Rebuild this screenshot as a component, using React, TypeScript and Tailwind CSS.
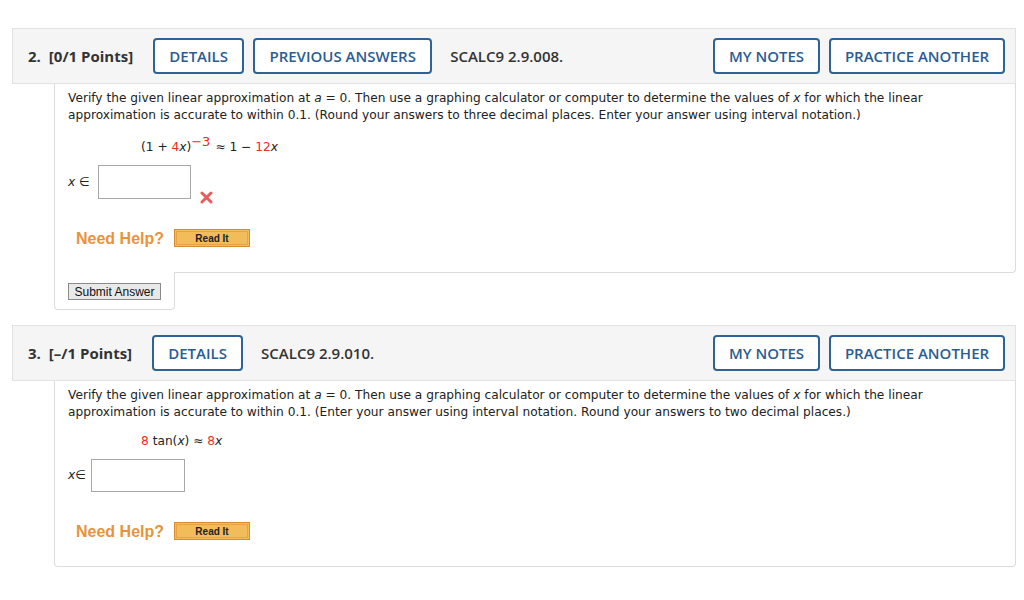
import React from "react";

const hdrFont = { fontFamily: '"Open Sans", "Liberation Sans", sans-serif' };
const bodyFont = { fontFamily: '"DejaVu Sans", Verdana, sans-serif' };
const arial = { fontFamily: '"Liberation Sans", Arial, sans-serif' };

function Btn({ children, w }: { children: React.ReactNode; w: string }) {
  return (
    <div
      className={`h-[36px] ${w} flex items-center justify-center rounded-[4px] border-2 border-[#2f6396] bg-white text-[15px] font-semibold text-[#2a5c92] shrink-0`}
      style={hdrFont}
    >
      {children}
    </div>
  );
}

function Header({ num, pts, code, prev }: { num: string; pts: string; code: string; prev?: boolean }) {
  return (
    <div className="h-[56px] flex items-center bg-[#f5f5f5] border border-[#e2e2e2] pl-[15px] pr-[10px]">
      <div className="flex items-center text-[15px] font-bold text-[#333]" style={hdrFont}>
        <span>{num}</span>
        <span className="ml-[8px]">{pts}</span>
      </div>
      <div className="ml-[20px] flex gap-[9px]">
        <Btn w="w-[91px]">DETAILS</Btn>
        {prev && <Btn w="w-[179px]">PREVIOUS ANSWERS</Btn>}
      </div>
      <div className="ml-[18px] text-[15px] font-semibold text-[#333]" style={hdrFont}>
        {code}
      </div>
      <div className="ml-auto flex gap-[9px]">
        <Btn w="w-[107px]">MY NOTES</Btn>
        <Btn w="w-[176px]">PRACTICE ANOTHER</Btn>
      </div>
    </div>
  );
}

function NeedHelp() {
  return (
    <div className="flex items-center ml-[8px]">
      <span className="text-[16px] font-bold text-[#e8933b]" style={arial}>
        Need Help?
      </span>
      <div className="ml-[10px] w-[76px] h-[18px] border border-[#d98a2e] bg-[#f3bc5b] p-[1px]">
        <div
          className="w-full h-full border border-[#e7a446] flex items-center justify-center text-[10px] font-bold text-[#222]"
          style={arial}
        >
          Read It
        </div>
      </div>
    </div>
  );
}

const R = ({ children }: { children: React.ReactNode }) => <span className="text-[#ee2a1c]">{children}</span>;

export default function App() {
  return (
    <div className="w-[1024px] h-[600px] bg-white pt-[28px] pl-[12px]">
      <div className="w-[1004px]">
        <Header num="2." pts="[0/1 Points]" code="SCALC9 2.9.008." prev />
        <div className="ml-[42px]">
          <div
            className="border-l border-r border-b border-[#dcdcdc] rounded-br-[4px] pl-[13px] pt-[6px] h-[189px] text-[12.2px] text-[#222] leading-[17px]"
            style={bodyFont}
          >
            <p>
              Verify the given linear approximation at <i>a</i> = 0. Then use a graphing calculator or computer to determine the values of <i>x</i> for which the linear
              <br />
              approximation is accurate to within 0.1. (Round your answers to three decimal places. Enter your answer using interval notation.)
            </p>
            <div className="mt-[15px] ml-[73px] flex items-start">
              <span>(1 + <R>4</R><i>x</i>)</span>
              <span className="relative -top-[6px] text-[13px] text-[#ee2a1c]">−3</span>
              <span className="ml-[5px]">≈ 1 − <R>12</R><i>x</i></span>
            </div>
            <div className="mt-[9px] flex items-start">
              <span className="mt-[9px]"><i>x</i> ∈</span>
              <div className="ml-[8px] w-[93px] h-[34px] border border-[#a8a8a8] bg-white" />
              <svg className="ml-[9px] mt-[26px]" width="13" height="13" viewBox="0 0 13 13">
                <path d="M2 2 L11 11 M11 2 L2 11" stroke="#ea5b5b" strokeWidth="3" strokeLinecap="round" />
              </svg>
            </div>
            <div className="mt-[25px]">
              <NeedHelp />
            </div>
          </div>
          <div className="-mt-px w-[121px] h-[38px] bg-white border-l border-r border-b border-[#dcdcdc] rounded-b-[4px] pl-[13px] pt-[11px]">
            <div
              className="w-[93px] h-[17px] border border-[#8a8a8a] bg-[#e9e9e9] flex items-center justify-center text-[12px] text-[#111]"
              style={arial}
            >
              Submit Answer
            </div>
          </div>
        </div>

        <div className="mt-[15px]">
          <Header num="3." pts="[–/1 Points]" code="SCALC9 2.9.010." />
        </div>
        <div className="ml-[42px]">
          <div
            className="border-l border-r border-b border-[#dcdcdc] rounded-b-[4px] pl-[13px] pt-[6px] h-[186px] text-[12.2px] text-[#222] leading-[17px]"
            style={bodyFont}
          >
            <p>
              Verify the given linear approximation at <i>a</i> = 0. Then use a graphing calculator or computer to determine the values of <i>x</i> for which the linear
              <br />
              approximation is accurate to within 0.1. (Enter your answer using interval notation. Round your answers to two decimal places.)
            </p>
            <div className="mt-[12px] ml-[73px]">
              <R>8</R> tan(<i>x</i>) ≈ <R>8</R><i>x</i>
            </div>
            <div className="mt-[9px] flex items-start">
              <span className="mt-[8px]"><i>x</i>∈</span>
              <div className="ml-[5px] w-[94px] h-[33px] border border-[#a8a8a8] bg-white" />
            </div>
            <div className="mt-[30px]">
              <NeedHelp />
            </div>
          </div>
        </div>
      </div>
    </div>
  );
}
